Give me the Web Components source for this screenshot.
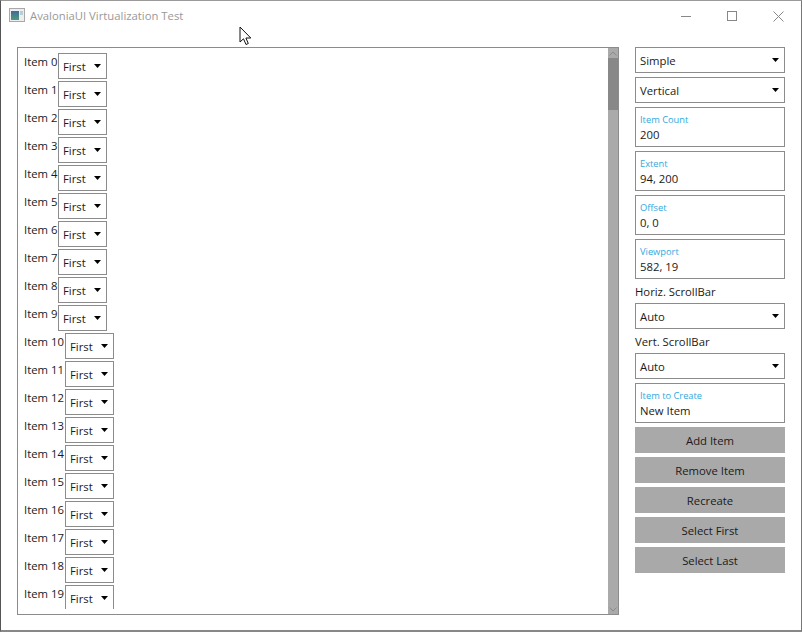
<!DOCTYPE html>
<html>
<head>
<meta charset="utf-8">
<title>AvaloniaUI Virtualization Test</title>
<style>
  html, body { margin: 0; padding: 0; background: #fff; }
  body { width: 802px; height: 632px; overflow: hidden; font: 11.3px "Open Sans", "Noto Sans", sans-serif; color: #1a1a1a; }
</style>
</head>
<body>
<app-window caption="AvaloniaUI Virtualization Test">
  <item-list count="20"></item-list>
  <side-panel slot="side">
    <combo-box value="Simple"></combo-box>
    <combo-box value="Vertical"></combo-box>
    <text-field label="Item Count" value="200"></text-field>
    <text-field label="Extent" value="94, 200"></text-field>
    <text-field label="Offset" value="0, 0"></text-field>
    <text-field label="Viewport" value="582, 19"></text-field>
    <plain-label>Horiz. ScrollBar</plain-label>
    <combo-box value="Auto"></combo-box>
    <plain-label>Vert. ScrollBar</plain-label>
    <combo-box value="Auto"></combo-box>
    <text-field label="Item to Create" value="New Item"></text-field>
    <grey-button>Add Item</grey-button>
    <grey-button>Remove Item</grey-button>
    <grey-button>Recreate</grey-button>
    <grey-button>Select First</grey-button>
    <grey-button>Select Last</grey-button>
  </side-panel>
</app-window>
<script>
(() => {
  const BORDER = '#8c8c8c';
  const ARROW = `<svg width="7" height="4" viewBox="0 0 7 4"><path d="M0 0H7L3.5 4Z" fill="#000"/></svg>`;

  class AppWindow extends HTMLElement {
    constructor() {
      super();
      this.attachShadow({ mode: 'open' });
    }
    connectedCallback() {
      this.shadowRoot.innerHTML = `
        <style>
          :host { display: flex; flex-direction: column; box-sizing: border-box; width: 802px; height: 632px; border-top: 1px solid #9a9a9a; border-left: 1px solid #555; border-right: 1px solid #777; border-bottom: 2px solid #888; background: #fff; }
          .title { display: flex; align-items: center; height: 30px; flex: none; }
          .icon { margin: -2px 5px 0 8px; flex: none; }
          .caption { color: #999; font-size: 11.3px; flex: 1; margin-top: -2px; }
          .btns { display: flex; }
          .btn { width: 46px; height: 30px; display: flex; align-items: center; justify-content: center; }
          .main { flex: 1; display: flex; padding: 16px 16px 15px 16px; gap: 16px; min-height: 0; }
          .cursor { position: absolute; left: 239px; top: 26px; }
        </style>
        <div class="title">
          <svg class="icon" width="16" height="14" viewBox="0 0 16 14">
            <defs>
              <linearGradient id="g" x1="0" y1="0" x2="0" y2="1">
                <stop offset="0" stop-color="#3f6a9c"/>
                <stop offset="1" stop-color="#4f9a7a"/>
              </linearGradient>
            </defs>
            <rect x="0.5" y="0.5" width="15" height="13" fill="#eee" stroke="#a8a8a8"/>
            <rect x="2" y="3" width="8" height="9" fill="url(#g)"/>
            <rect x="11" y="3" width="3" height="4" fill="#b9cdd4"/>
          </svg>
          <div class="caption">${this.getAttribute('caption')}</div>
          <div class="btns">
            <div class="btn"><svg width="10" height="10"><path d="M0 5.5H10" stroke="#888"/></svg></div>
            <div class="btn"><svg width="10" height="10"><rect x="0.5" y="0.5" width="9" height="9" fill="none" stroke="#888"/></svg></div>
            <div class="btn"><svg width="11" height="11"><path d="M0.5 0.5L10.5 10.5M10.5 0.5L0.5 10.5" stroke="#888"/></svg></div>
          </div>
        </div>
        <div class="main">
          <slot></slot>
          <slot name="side"></slot>
        </div>
        <svg class="cursor" width="13" height="20" viewBox="0 0 13 20">
          <path d="M1 1V16L4.5 12.8L7 18.5L9.3 17.5L6.9 12H11.8Z" fill="#fff" stroke="#111" stroke-linejoin="round"/>
        </svg>
      `;
    }
  }

  class ItemList extends HTMLElement {
    constructor() {
      super();
      this.attachShadow({ mode: 'open' });
    }
    connectedCallback() {
      const count = +this.getAttribute('count');
      let rows = '';
      for (let i = 0; i < count; i++) rows += `<item-row index="${i}"></item-row>`;
      this.shadowRoot.innerHTML = `
        <style>
          :host { display: flex; box-sizing: border-box; width: 602px; height: 568px; flex: none; border: 1px solid ${BORDER}; }
          .rows { flex: 1; display: flex; flex-direction: column; gap: 2px; overflow: hidden; padding: 5px 0 0 6px; margin-bottom: 5px; }
        </style>
        <div class="rows">${rows}</div>
        <scroll-bar></scroll-bar>
      `;
    }
  }

  class ItemRow extends HTMLElement {
    constructor() {
      super();
      this.attachShadow({ mode: 'open' });
    }
    connectedCallback() {
      const index = +this.getAttribute('index');
      this.shadowRoot.innerHTML = `
        <style>
          :host { display: flex; flex: none; height: 26px; }
          .text { line-height: 18px; width: ${index < 10 ? 34 : 41}px; flex: none; }
          combo-box { width: 49px; --pad: 4px; --arrow-right: 5px; }
        </style>
        <span class="text">Item ${index}</span>
        <combo-box value="First"></combo-box>
      `;
    }
  }

  class ScrollBar extends HTMLElement {
    constructor() {
      super();
      this.attachShadow({ mode: 'open' });
    }
    connectedCallback() {
      this.shadowRoot.innerHTML = `
        <style>
          :host { display: flex; flex-direction: column; flex: none; width: 10px; background: #aaa; }
          .end { height: 10px; flex: none; display: flex; align-items: center; justify-content: center; }
          .thumb { height: 52px; flex: none; background: #888; }
          .space { flex: 1; }
        </style>
        <div class="end"><svg width="8" height="5"><path d="M0.5 4.5L4 1L7.5 4.5" fill="none" stroke="#8a8a8a"/></svg></div>
        <div class="thumb"></div>
        <div class="space"></div>
        <div class="end"><svg width="8" height="5"><path d="M0.5 0.5L4 4L7.5 0.5" fill="none" stroke="#8a8a8a"/></svg></div>
      `;
    }
  }

  class SidePanel extends HTMLElement {
    constructor() {
      super();
      this.attachShadow({ mode: 'open' });
    }
    connectedCallback() {
      this.shadowRoot.innerHTML = `
        <style>
          :host { display: flex; flex-direction: column; gap: 4px; width: 150px; flex: none; }
        </style>
        <slot></slot>
      `;
    }
  }

  class ComboBox extends HTMLElement {
    constructor() {
      super();
      this.attachShadow({ mode: 'open' });
    }
    connectedCallback() {
      this.shadowRoot.innerHTML = `
        <style>
          :host { display: flex; align-items: center; box-sizing: border-box; height: 26px; flex: none; border: 1px solid ${BORDER}; background: #fff; padding: 0 var(--arrow-right, 5px) 0 var(--pad, 4px); }
          .value { flex: 1; }
          svg { flex: none; }
        </style>
        <span class="value">${this.getAttribute('value')}</span>
        ${ARROW}
      `;
    }
  }

  class TextField extends HTMLElement {
    constructor() {
      super();
      this.attachShadow({ mode: 'open' });
    }
    connectedCallback() {
      this.shadowRoot.innerHTML = `
        <style>
          :host { display: flex; flex-direction: column; box-sizing: border-box; height: 40px; flex: none; border: 1px solid ${BORDER}; padding: 5px 4px 0; background: #fff; }
          .label { font-size: 9.3px; line-height: 13px; color: #2fa9e0; }
          .value { line-height: 17px; }
        </style>
        <span class="label">${this.getAttribute('label')}</span>
        <span class="value">${this.getAttribute('value')}</span>
      `;
    }
  }

  class PlainLabel extends HTMLElement {
    constructor() {
      super();
      this.attachShadow({ mode: 'open' });
    }
    connectedCallback() {
      this.shadowRoot.innerHTML = `
        <style>
          :host { display: block; flex: none; height: 16px; line-height: 18px; }
        </style>
        <slot></slot>
      `;
    }
  }

  class GreyButton extends HTMLElement {
    constructor() {
      super();
      this.attachShadow({ mode: 'open' });
    }
    connectedCallback() {
      this.shadowRoot.innerHTML = `
        <style>
          :host { display: flex; align-items: center; justify-content: center; height: 26px; flex: none; background: #a9a9a9; }
        </style>
        <slot></slot>
      `;
    }
  }

  const defs = {
    'app-window': AppWindow,
    'item-list': ItemList,
    'item-row': ItemRow,
    'scroll-bar': ScrollBar,
    'side-panel': SidePanel,
    'combo-box': ComboBox,
    'text-field': TextField,
    'plain-label': PlainLabel,
    'grey-button': GreyButton,
  };
  Object.keys(defs).forEach((name) => window.customElements.define(name, defs[name]));
})();
</script>
</body>
</html>
